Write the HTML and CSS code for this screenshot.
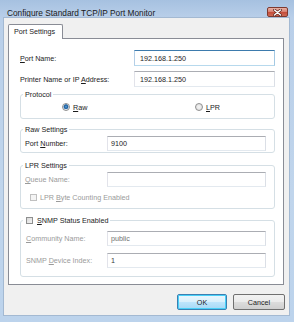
FILE: index.html
```html
<!DOCTYPE html>
<html>
<head>
<meta charset="utf-8">
<link rel="stylesheet" href="styles.css">
</head>
<body>
<div class="window">
  <div class="titlebar">
    <span class="title">Configure Standard TCP/IP Port Monitor</span>
    <span class="close">
      <svg width="9" height="7" viewBox="0 0 9 7">
        <path d="M1.5 1 L7.5 6 M7.5 1 L1.5 6" stroke="#5a2219" stroke-width="2.8" stroke-linecap="round"/>
        <path d="M1.5 1 L7.5 6 M7.5 1 L1.5 6" stroke="#ffffff" stroke-width="1.5" stroke-linecap="round"/>
      </svg>
    </span>
  </div>
  <div class="client">
    <div class="tabs"><div class="tab">Port Settings</div></div>
    <div class="panel">
      <div class="field">
        <span class="lbl lbl-top"><u>P</u>ort Name:</span>
        <span class="input input-top focus">192.168.1.250</span>
      </div>
      <div class="field field-2">
        <span class="lbl lbl-top">Printer Name or IP <u>A</u>ddress:</span>
        <span class="input input-top">192.168.1.250</span>
      </div>

      <fieldset class="group g-protocol">
        <legend class="legend">Protocol</legend>
        <div class="radios">
          <span class="opt"><span class="radio checked"></span><span><u>R</u>aw</span></span>
          <span class="opt"><span class="radio"></span><span><u>L</u>PR</span></span>
        </div>
      </fieldset>

      <fieldset class="group g-raw">
        <legend class="legend">Raw Settings</legend>
        <div class="field field-in">
          <span class="lbl lbl-in">Port <u>N</u>umber:</span>
          <span class="input input-in">9100</span>
        </div>
      </fieldset>

      <fieldset class="group g-lpr">
        <legend class="legend">LPR Settings</legend>
        <div class="field field-in">
          <span class="lbl lbl-in dis"><u>Q</u>ueue Name:</span>
          <span class="input input-in"></span>
        </div>
        <div class="check-row">
          <span class="checkbox dis-box"></span><span class="dis">LPR <u>B</u>yte Counting Enabled</span>
        </div>
      </fieldset>

      <fieldset class="group g-snmp">
        <legend class="legend legend-check"><span class="checkbox"></span><span><u>S</u>NMP Status Enabled</span></legend>
        <div class="field field-in field-comm">
          <span class="lbl lbl-in lbl-snmp dis"><u>C</u>ommunity Name:</span>
          <span class="input input-in val-dis">public</span>
        </div>
        <div class="field field-in field-dev">
          <span class="lbl lbl-in lbl-snmp dis">SNMP <u>D</u>evice Index:</span>
          <span class="input input-in val-dis2">1</span>
        </div>
      </fieldset>
    </div>
    <div class="buttons">
      <span class="btn btn-default">OK</span>
      <span class="btn btn-cancel">Cancel</span>
    </div>
  </div>
</div>
</body>
</html>
```
FILE: styles.css
```css
html, body {
  margin: 0;
  padding: 0;
}
body {
  width: 294px;
  height: 322px;
  overflow: hidden;
  font-family: "Liberation Sans", Arial, sans-serif;
  font-size: 7.2px;
  color: #1c1c1c;
}
u {
  text-decoration: underline;
  text-underline-offset: 1px;
}

.window {
  display: flex;
  flex-direction: column;
  height: 322px;
  background: linear-gradient(to bottom, #a6c1e0 0px, #b9cfe9 18px, #c0d5ec 60%, #bcd3ec 100%);
}

.titlebar {
  height: 18px;
  display: flex;
  justify-content: space-between;
  align-items: flex-start;
  flex: none;
}
.title {
  padding: 8px 0 0 7px;
  font-size: 8.3px;
  line-height: 10px;
  color: #1a1a1a;
}
.close {
  margin: 7px 6px 0 0;
  width: 21px;
  height: 10px;
  box-sizing: border-box;
  border: 1px solid #7e3a30;
  border-radius: 2px;
  background: linear-gradient(to bottom, #e9b2a6 0%, #d88273 45%, #c44c39 52%, #cf6a55 100%);
  display: flex;
  align-items: center;
  justify-content: center;
}
.close svg {
  display: block;
}

.client {
  flex: 1;
  margin: 0 5px 7px 4px;
  background: #f0f0f0;
  display: flex;
  flex-direction: column;
  box-shadow: 0 0 0 1px #a3b9d2;
}

.tabs {
  margin-top: 6px;
  padding-left: 4px;
  display: flex;
  position: relative;
  z-index: 1;
}
.tab {
  width: 55px;
  height: 15px;
  box-sizing: border-box;
  border: 1px solid #898c95;
  border-bottom: none;
  border-radius: 2px 2px 0 0;
  background: #fff;
  padding-left: 5px;
  line-height: 13px;
  margin-bottom: -1px;
  color: #1c1c1c;
}

.panel {
  margin: 0 5px 0 4px;
  height: 247px;
  box-sizing: border-box;
  border: 1px solid #898c95;
  background: #fff;
  padding: 11px 8px 0 11px;
  display: flex;
  flex-direction: column;
}

.field {
  display: flex;
  align-items: center;
}
.field-2 {
  margin-top: 5px;
}
.lbl-top {
  width: 114px;
  flex: none;
}
.input {
  box-sizing: border-box;
  background: #fff;
  border: 1px solid;
  border-color: #abadb3 #dbdfe6 #e3e9ef #e2e3ea;
  padding-left: 5px;
  display: flex;
  align-items: center;
  color: #1c1c1c;
}
.input-top {
  width: 141px;
  height: 16px;
}
.focus {
  border-color: #3d7bad #a4c9e3 #b7d9ed #b5cfe7;
}

.group {
  margin: 0;
  padding: 0;
  min-width: 0;
  border: 1px solid #d5dfe5;
  border-radius: 3px;
}
.legend {
  padding: 0 2px;
  margin-left: 2px;
  line-height: 9px;
  color: #1c1c1c;
}
.legend-check {
  display: flex;
  align-items: center;
  padding-left: 3px;
}
.legend-check .checkbox {
  margin-right: 4px;
}

.g-protocol {
  margin-top: 3px;
}
.radios {
  display: grid;
  grid-template-columns: 133px auto;
  padding-left: 42px;
  margin: 3px 0 6px;
  height: 10px;
  align-items: center;
}
.opt {
  display: flex;
  align-items: center;
}
.radio {
  width: 8px;
  height: 8px;
  box-sizing: border-box;
  border-radius: 50%;
  border: 1px solid #8f8f8f;
  background: radial-gradient(circle at 50% 50%, #f4f4f4 0, #dcdcdc 100%);
  margin-right: 3px;
  margin-left: -1px;
}
.radio.checked {
  background: radial-gradient(circle at 50% 45%, #5fa7e0 0, #1f5f9c 1.6px, #3c7cb8 2.2px, #e9eef4 2.8px, #d6d6d6 100%);
}

.g-raw {
  margin-top: 6px;
}
.field-in {
  margin-top: 2px;
}
.lbl-in {
  width: 86px;
  flex: none;
  box-sizing: border-box;
  padding-left: 4px;
}
.lbl-snmp {
  padding-left: 5px;
}
.input-in {
  width: 159px;
  height: 15px;
  padding-left: 3px;
}
.g-raw .field-in {
  margin-bottom: 1px;
}

.g-lpr {
  margin-top: 8px;
}
.check-row {
  display: flex;
  align-items: center;
  height: 9px;
  margin: 6px 0 6px;
  padding-left: 9px;
}
.check-row .checkbox {
  margin-right: 3px;
}
.checkbox {
  width: 7px;
  height: 7px;
  box-sizing: border-box;
  border: 1px solid #8e8f8f;
  background: linear-gradient(135deg, #d9d9d9 0%, #f4f4f4 100%);
  flex: none;
}
.dis-box {
  border-color: #c0c0c0;
  background: #f4f4f4;
}
.dis {
  color: #9a9a9a;
}
.val-dis {
  color: #707070;
}
.val-dis2 {
  color: #3a3a3a;
}

.g-snmp {
  margin-top: 7px;
  padding-bottom: 8px;
}
.field-comm {
  margin-top: 6px;
}
.field-dev {
  margin-top: 7px;
}

.buttons {
  margin-top: 9px;
  margin-right: 4px;
  display: flex;
  justify-content: flex-end;
  gap: 6px;
}
.btn {
  height: 16px;
  box-sizing: border-box;
  border: 1px solid #707070;
  border-radius: 2px;
  background: linear-gradient(to bottom, #f2f2f2 0%, #ebebeb 49%, #dddddd 50%, #cfcfcf 100%);
  display: flex;
  align-items: center;
  justify-content: center;
  color: #1c1c1c;
}
.btn-default {
  width: 50px;
  border-color: #3c7fb1;
  background: linear-gradient(to bottom, #eaf6fd 0%, #d9f0fc 49%, #bee6fd 50%, #a7d9f5 100%);
  box-shadow: inset 0 0 0 1px #48d0f8;
}
.btn-cancel {
  width: 52px;
}
```
